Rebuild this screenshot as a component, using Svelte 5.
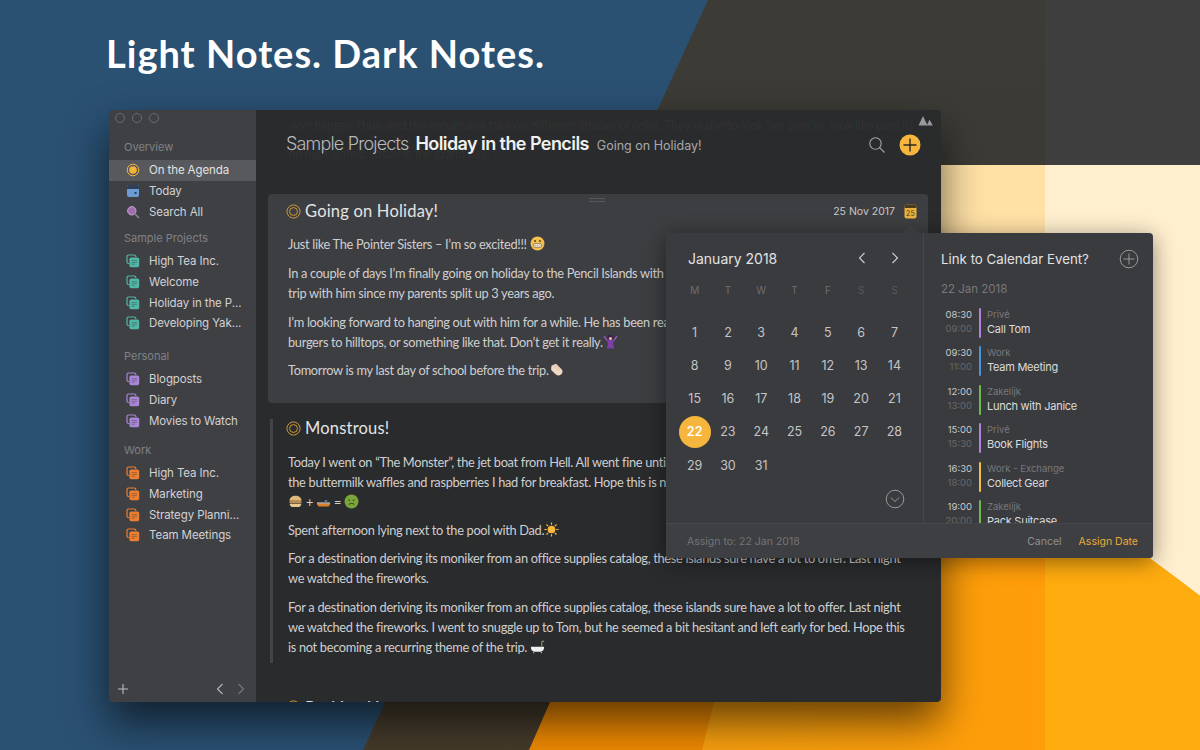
<script>
    const groups = [
        { label: 'Overview', items: [
            { name: 'On the Agenda', icon: 'agenda', active: true },
            { name: 'Today', icon: 'today' },
            { name: 'Search All', icon: 'search' }
        ]},
        { label: 'Sample Projects', items: [
            { name: 'High Tea Inc.', icon: 'stack', color: '#4fb8a6' },
            { name: 'Welcome', icon: 'stack', color: '#4fb8a6' },
            { name: 'Holiday in the P...', icon: 'stack', color: '#4fb8a6' },
            { name: 'Developing Yak...', icon: 'stack', color: '#4fb8a6' }
        ]},
        { label: 'Personal', items: [
            { name: 'Blogposts', icon: 'stack', color: '#a986d6' },
            { name: 'Diary', icon: 'stack', color: '#a986d6' },
            { name: 'Movies to Watch', icon: 'stack', color: '#a986d6' }
        ]},
        { label: 'Work', items: [
            { name: 'High Tea Inc.', icon: 'stack', color: '#ee7f30' },
            { name: 'Marketing', icon: 'stack', color: '#ee7f30' },
            { name: 'Strategy Planni...', icon: 'stack', color: '#ee7f30' },
            { name: 'Team Meetings', icon: 'stack', color: '#ee7f30' }
        ]}
    ]

    const weekdays = ['M', 'T', 'W', 'T', 'F', 'S', 'S']
    const days = Array.from({ length: 31 }, (_, i) => i + 1)

    const events = [
        { from: '08:30', to: '09:00', cal: 'Privé', title: 'Call Tom', color: '#b67fd8' },
        { from: '09:30', to: '11:00', cal: 'Work', title: 'Team Meeting', color: '#4a94dc' },
        { from: '12:00', to: '13:00', cal: 'Zakelijk', title: 'Lunch with Janice', color: '#6cbb4e' },
        { from: '15:00', to: '15:30', cal: 'Privé', title: 'Book Flights', color: '#b67fd8' },
        { from: '16:30', to: '18:00', cal: 'Work - Exchange', title: 'Collect Gear', color: '#eec044' },
        { from: '19:00', to: '20:00', cal: 'Zakelijk', title: 'Pack Suitcase', color: '#6cbb4e' }
    ]
</script>

{#snippet stack(color)}
    <svg class="side-icon" viewBox="0 0 14 14">
        <path d="M3 9.500H2.400A1.400 1.400 0 0 1 1 8.100V2.400A1.400 1.400 0 0 1 2.400 1h6A1.400 1.400 0 0 1 9.800 2.400V3" fill="none" stroke={color} stroke-width="1.200"/>
        <rect x="3.400" y="3.400" width="9.800" height="9.800" rx="1.800" fill={color}/>
        <path d="M5.600 6.600h5.400M5.600 8.400h5.400M5.600 10.200h3.400" stroke="#3f4044" stroke-width=".7" opacity=".6"/>
    </svg>
{/snippet}

{#snippet ring()}
    <svg class="ring" viewBox="0 0 16 16">
        <circle cx="8" cy="8" r="7" fill="none" stroke="#d5a036" stroke-width="1"/>
        <circle cx="8" cy="8" r="4.200" fill="none" stroke="#d5a036" stroke-width="1"/>
    </svg>
{/snippet}

{#snippet grin()}
    <svg class="emoji" viewBox="0 0 14 14">
        <circle cx="7" cy="7" r="6.500" fill="#f2c04e"/>
        <rect x="3" y="7" width="8" height="3.600" rx="1.600" fill="#f4f1e6" stroke="#6b4a1c" stroke-width=".5"/>
        <path d="M5 7v3.600M7 7v3.600M9 7v3.600M3 8.800h8" stroke="#a89a80" stroke-width=".4"/>
        <circle cx="4.700" cy="4.600" r=".9" fill="#5a3c14"/><circle cx="9.300" cy="4.600" r=".9" fill="#5a3c14"/>
    </svg>
{/snippet}

{#snippet dancer()}
    <svg class="emoji" viewBox="0 0 14 14">
        <circle cx="7" cy="3.400" r="2.600" fill="#3a2350"/>
        <circle cx="7" cy="4.200" r="1.500" fill="#e6b9a0"/>
        <path d="M3.600 5.600h6.800L9.400 9l1 4.600H3.600L4.600 9z" fill="#7c3fa8"/>
        <path d="M3.800 6 1 2M10.200 6 13 2" stroke="#a65bd0" stroke-width="1"/>
    </svg>
{/snippet}

{#snippet hands()}
    <svg class="emoji" viewBox="0 0 14 14">
        <path d="M2.200 3.400 6.600 1.600l5.600 5.600c.9 1.600.3 3.800-1.400 4.800-1.400.8-3.200.6-4.400-.4L2 7.400z" fill="#f0d8c4"/>
        <path d="M4 3.200l5 5M5.600 2.400l5 5" stroke="#c8a78e" stroke-width=".5"/>
    </svg>
{/snippet}

{#snippet burger()}
    <svg class="emoji" viewBox="0 0 14 14">
        <path d="M1.400 6.400C1.400 3 4 1.600 7 1.600s5.600 1.400 5.600 4.800z" fill="#e0b878"/>
        <rect x="1.200" y="6.600" width="11.600" height="2" rx="1" fill="#b98b4e"/>
        <path d="M1.600 9h10.800c0 2.200-1.600 3.200-3 3.200H4.600c-1.400 0-3-1-3-3.200z" fill="#e6c891"/>
    </svg>
{/snippet}

{#snippet boat()}
    <svg class="emoji" viewBox="0 0 14 14">
        <path d="M.5 8.800h13l-1.600 2.800H2.400z" fill="#d9822b"/>
        <path d="M1 8.400h12" stroke="#f1ece2" stroke-width=".9"/>
        <path d="M6.500 8.400 9 5.600h1.600l-1 2.800z" fill="#5e7f98"/>
    </svg>
{/snippet}

{#snippet sick()}
    <svg class="emoji" viewBox="0 0 14 14">
        <circle cx="7" cy="7" r="6.500" fill="#7aa53a"/>
        <path d="M4 5.400l1.800.8M10 5.400l-1.800.8" stroke="#2f4312" stroke-width=".9"/>
        <path d="M4.400 9.800c1.400-1.400 3.800-1.400 5.200 0" fill="none" stroke="#2f4312" stroke-width=".9"/>
    </svg>
{/snippet}

{#snippet sun()}
    <svg class="emoji" viewBox="0 0 14 14">
        <circle cx="7" cy="7" r="3.600" fill="#f6b73c"/>
        <path d="M7 .4v2.200M7 11.400v2.200M.4 7h2.200M11.400 7h2.200M2.300 2.300l1.600 1.600M10.100 10.100l1.600 1.600M2.300 11.700l1.600-1.600M10.100 3.900l1.600-1.600" stroke="#f6b73c" stroke-width="1.100"/>
    </svg>
{/snippet}

{#snippet bath()}
    <svg class="emoji" viewBox="0 0 14 14">
        <path d="M.8 7.200h12.400c0 3-1.400 4.600-3.600 4.600H4.400C2.200 11.800.8 10.200.8 7.200z" fill="#eef0f0"/>
        <path d="M11 7V2.800C11 1.600 12.800 1.400 13 2.800" fill="none" stroke="#7f9e6a" stroke-width="1"/>
        <path d="M3.400 12v1.200M10.600 12v1.200" stroke="#b8b8b8" stroke-width="1"/>
    </svg>
{/snippet}

<div class="page">
    <svg class="art" viewBox="0 0 1200 750">
        <defs>
            <linearGradient id="brown" x1="0" y1="0" x2="0" y2="1">
                <stop offset="0" stop-color="#3c3b36"/>
                <stop offset=".75" stop-color="#3b3931"/>
                <stop offset="1" stop-color="#463b2b"/>
            </linearGradient>
            <linearGradient id="amber" x1="0" y1="0" x2="1" y2="0">
                <stop offset="0" stop-color="#f9a10f"/>
                <stop offset="1" stop-color="#ff9d0a"/>
            </linearGradient>
        </defs>
        <rect width="1200" height="750" fill="#2a5072"/>
        <polygon points="708,0 1200,0 1200,750 363,750" fill="url(#brown)"/>
        <rect x="1045" width="155" height="165" fill="#3e3e3e"/>
        <rect x="941" y="165" width="104" height="585" fill="#ffe1a6"/>
        <rect x="1045" y="165" width="155" height="585" fill="#ffefcf"/>
        <path d="M529 750 700 360H1000L1110 530Q1160 565 1200 596V750Z" fill="#ef8a02"/>
        <path d="M702 750 800 360H1000L1045 510V750Z" fill="url(#amber)"/>
        <path d="M1045 510 1110 530Q1160 565 1200 596V750H1045Z" fill="#ffac0f"/>
    </svg>

    <h1>Light Notes. Dark Notes.</h1>

    <div class="window">
        <aside class="sidebar">
            <div class="lights"><i></i><i></i><i></i></div>

            {#each groups as group}
                <section class="group">
                    <div class="group-label">{group.label}</div>
                    {#each group.items as item}
                        <div class="row" class:active={item.active}>
                            {#if item.icon === 'agenda'}
                                <svg class="side-icon" viewBox="0 0 14 14">
                                    <circle cx="7" cy="7" r="5.800" fill="none" stroke="#f0b440" stroke-width="1"/>
                                    <circle cx="7" cy="7" r="3.800" fill="#f5b338"/>
                                </svg>
                            {:else if item.icon === 'today'}
                                <svg class="side-icon" viewBox="0 0 14 14">
                                    <rect x="1" y="1" width="12" height="12" rx="2" fill="#6c9bd6"/>
                                    <path d="M1 3a2 2 0 0 1 2-2h8a2 2 0 0 1 2 2v2H1z" fill="#2f3f58"/>
                                    <rect x="8.500" y="8" width="2" height="2" fill="#2f3f58"/>
                                </svg>
                            {:else if item.icon === 'search'}
                                <svg class="side-icon" viewBox="0 0 14 14">
                                    <circle cx="5.800" cy="5.800" r="4.200" fill="#a06fb0" stroke="#c3a3cf" stroke-width="1"/>
                                    <path d="M9 9l4 4" stroke="#8f8f96" stroke-width="1.300"/>
                                </svg>
                            {:else}
                                {@render stack(item.color)}
                            {/if}
                            <span>{item.name}</span>
                        </div>
                    {/each}
                </section>
            {/each}

            <div class="side-foot">
                <svg width="12" height="12" viewBox="0 0 12 12"><path d="M6 1v10M1 6h10" stroke="#bdbdc0" stroke-width="1.100"/></svg>
                <div class="side-nav">
                    <svg width="8" height="12" viewBox="0 0 8 12"><path d="M6.500 1 1.500 6l5 5" fill="none" stroke="#b5b5b8" stroke-width="1.100"/></svg>
                    <svg width="8" height="12" viewBox="0 0 8 12"><path d="M1.500 1l5 5-5 5" fill="none" stroke="#77787b" stroke-width="1.100"/></svg>
                </div>
            </div>
        </aside>

        <main class="main">
            <div class="ghost ghost-1">sky changes, thus, and the mountains take on different shades of color. They really do look like pencils. look like pencils</div>
            <div class="ghost ghost-2">on highlighted. Today is the grand day!</div>

            <header class="head">
                <div class="crumbs">
                    <span class="crumb-light">Sample Projects</span>
                    <span class="crumb-bold">Holiday in the Pencils</span>
                    <span class="crumb-small">Going on Holiday!</span>
                </div>
                <svg class="search" width="18" height="18" viewBox="0 0 18 18">
                    <circle cx="7.500" cy="7.500" r="5.700" fill="none" stroke="#a5a5a7" stroke-width="1.100"/>
                    <path d="M11.600 11.600 16.500 16.500" stroke="#a5a5a7" stroke-width="1.200"/>
                </svg>
                <svg class="add" width="22" height="22" viewBox="0 0 22 22">
                    <circle cx="11" cy="11" r="10.500" fill="#f6b63e"/>
                    <path d="M11 4.500v13M4.500 11h13" stroke="#2d2a22" stroke-width="1.400"/>
                </svg>
            </header>

            <svg class="peaks" width="15" height="10" viewBox="0 0 15 10">
                <path d="M5 0 9.500 9.500H0.500zM11.500 3.500 14.800 9.500H8.800z" fill="#9a9a9c"/>
            </svg>

            <div class="notes">
                <article class="card">
                    <div class="handle"></div>
                    <div class="note-title">
                        {@render ring()}
                        <span>Going on Holiday!</span>
                        <span class="due">25 Nov 2017</span>
                        <svg class="due-icon" width="13" height="15" viewBox="0 0 13 15">
                            <rect x=".5" y=".5" width="12" height="14" rx="2" fill="#eab13f"/>
                            <path d="M.5 2.500a2 2 0 0 1 2-2h8a2 2 0 0 1 2 2v1.500H.5z" fill="#4a3c1e"/>
                            <text x="6.500" y="12" text-anchor="middle">25</text>
                        </svg>
                    </div>
                    <p>Just like The Pointer Sisters – I’m so excited!!! {@render grin()}</p>
                    <p>In a couple of days I’m finally going on holiday to the Pencil Islands with my dad. It will be the first proper<br/>trip with him since my parents split up 3 years ago.</p>
                    <p>I’m looking forward to hanging out with him for a while. He has been really into climbing lately, from<br/>burgers to hilltops, or something like that. Don’t get it really.{@render dancer()}</p>
                    <p>Tomorrow is my last day of school before the trip.{@render hands()}</p>
                </article>

                <article class="quote">
                    <div class="note-title">
                        {@render ring()}
                        <span>Monstrous!</span>
                    </div>
                    <p>Today I went on “The Monster”, the jet boat from Hell. All went fine until we hit the rapids and I lost all of<br/>the buttermilk waffles and raspberries I had for breakfast. Hope this is not going to be a thing this holiday.<br/>{@render burger()} + {@render boat()} = {@render sick()}</p>
                    <p>Spent afternoon lying next to the pool with Dad.{@render sun()}</p>
                    <p>For a destination deriving its moniker from an office supplies catalog, these islands sure have a lot to offer. Last night<br/>we watched the fireworks.</p>
                    <p>For a destination deriving its moniker from an office supplies catalog, these islands sure have a lot to offer. Last night<br/>we watched the fireworks. I went to snuggle up to Tom, but he seemed a bit hesitant and left early for bed. Hope this<br/>is not becoming a recurring theme of the trip. {@render bath()}</p>
                </article>

                <div class="note-title next">
                    {@render ring()}
                    <span>Packing List</span>
                </div>
            </div>

            <div class="popover">
                <div class="caret"></div>
                <div class="pop-body">
                    <section class="calendar">
                        <div class="cal-head">
                            <span>January 2018</span>
                            <div class="cal-nav">
                                <svg width="8" height="12" viewBox="0 0 8 12"><path d="M6.500 1 1.500 6l5 5" fill="none" stroke="#cfcfd0" stroke-width="1.100"/></svg>
                                <svg width="8" height="12" viewBox="0 0 8 12"><path d="M1.500 1l5 5-5 5" fill="none" stroke="#cfcfd0" stroke-width="1.100"/></svg>
                            </div>
                        </div>
                        <div class="weekdays">
                            {#each weekdays as d}<span>{d}</span>{/each}
                        </div>
                        <div class="days">
                            {#each days as d}
                                <span class:picked={d === 22}>{d}</span>
                            {/each}
                        </div>
                        <svg class="more" width="20" height="20" viewBox="0 0 20 20">
                            <circle cx="10" cy="10" r="8.800" fill="none" stroke="#98989a" stroke-width="1"/>
                            <path d="M5.800 8.500 10 12.500l4.200-4" fill="none" stroke="#98989a" stroke-width="1"/>
                        </svg>
                    </section>
                    <section class="link">
                        <div class="link-head">
                            <span>Link to Calendar Event?</span>
                            <svg width="20" height="20" viewBox="0 0 20 20">
                                <circle cx="10" cy="10" r="8.800" fill="none" stroke="#98989a" stroke-width="1"/>
                                <path d="M10 4.500v11M4.500 10h11" stroke="#98989a" stroke-width="1"/>
                            </svg>
                        </div>
                        <div class="link-date">22 Jan 2018</div>
                        <div class="events">
                            {#each events as ev}
                                <div class="event">
                                    <div class="times"><b>{ev.from}</b><i>{ev.to}</i></div>
                                    <div class="bar" style="background: {ev.color}"></div>
                                    <div class="ev-text"><small>{ev.cal}</small><span>{ev.title}</span></div>
                                </div>
                            {/each}
                        </div>
                    </section>
                </div>
                <footer class="pop-foot">
                    <span class="assign-to">Assign to: 22 Jan 2018</span>
                    <span class="cancel">Cancel</span>
                    <span class="assign">Assign Date</span>
                </footer>
            </div>
        </main>
    </div>
</div>

<style>
    :global(body) {
        margin: 0;
        background: #2a5072;
    }

    .page {
        position: relative;
        width: 1200px;
        height: 750px;
        overflow: hidden;
        font-family: Inter, "Liberation Sans", sans-serif;
    }

    .art {
        position: absolute;
        inset: 0;
        width: 1200px;
        height: 750px;
    }

    h1 {
        position: relative;
        box-sizing: border-box;
        height: 110px;
        margin: 0;
        padding: 29px 0 0 106px;
        font-family: Lato, sans-serif;
        font-size: 38px;
        line-height: 48px;
        font-weight: 700;
        letter-spacing: 1px;
        color: #fff;
    }

    .window {
        position: relative;
        display: flex;
        width: 832px;
        height: 592px;
        margin-left: 109px;
        border-radius: 4px;
        box-shadow: 0 20px 42px rgba(0, 0, 0, .6);
    }

    /* sidebar */
    .sidebar {
        display: flex;
        flex-direction: column;
        flex: none;
        width: 147px;
        background: #3f4044;
        border-radius: 4px 0 0 4px;
    }

    .lights {
        display: flex;
        gap: 7px;
        height: 29px;
        padding: 3px 0 0 6px;
        box-sizing: border-box;
    }

    .lights i {
        width: 10px;
        height: 10px;
        border: 1px solid #6b6c70;
        border-radius: 50%;
        box-sizing: border-box;
    }

    .group-label {
        height: 16px;
        margin-bottom: 5px;
        padding-left: 15px;
        font-size: 11px;
        line-height: 16px;
        color: #808186;
    }

    .group:nth-of-type(2) { margin-top: 8px; }
    .group:nth-of-type(3) { margin-top: 14px; }
    .group:nth-of-type(4) { margin-top: 11px; }

    .row {
        display: flex;
        align-items: center;
        gap: 9px;
        height: 20.7px;
        padding-left: 17px;
        font-size: 11.500px;
        letter-spacing: -.1px;
        color: #d2d2d4;
        white-space: nowrap;
    }

    .row.active {
        background: #58595c;
        color: #e2e2e3;
    }

    .side-icon {
        flex: none;
        width: 14px;
        height: 14px;
    }

    .side-foot {
        display: flex;
        align-items: center;
        justify-content: space-between;
        margin-top: auto;
        padding: 0 11px 7px 8px;
    }

    .side-nav {
        display: flex;
        gap: 13px;
    }

    /* main column */
    .main {
        position: relative;
        display: flex;
        flex-direction: column;
        flex: 1;
        min-width: 0;
        background: #2a2b2d;
        border-radius: 0 4px 4px 0;
    }

    .ghost {
        position: absolute;
        left: 32px;
        font-family: Lato, sans-serif;
        font-size: 12.800px;
        letter-spacing: -.31px;
        color: rgba(255, 255, 255, .045);
        white-space: nowrap;
    }

    .ghost-1 { top: 7px; }
    .ghost-2 { top: 35px; }

    .head {
        position: relative;
        display: flex;
        align-items: center;
        flex: none;
        height: 84px;
        padding: 0 20px 14px 30px;
        box-sizing: border-box;
    }

    .crumbs {
        display: flex;
        align-items: baseline;
        flex: 1;
        margin-top: -4px;
        white-space: nowrap;
    }

    .crumb-light {
        font-size: 18px;
        font-weight: 300;
        letter-spacing: -.83px;
        color: #b8b8ba;
    }

    .crumb-bold {
        margin-left: 7px;
        font-size: 18px;
        font-weight: 600;
        letter-spacing: -.57px;
        color: #f0f0f0;
    }

    .crumb-small {
        margin-left: 8px;
        font-size: 12.500px;
        color: #a9a9ab;
    }

    .search {
        margin-right: 13px;
    }

    .peaks {
        position: absolute;
        top: 6px;
        right: 8px;
    }

    .notes {
        flex: 1;
        min-height: 0;
        overflow: hidden;
        padding: 0 13px 0 12px;
        font-family: Lato, sans-serif;
        border-radius: 0 0 4px 0;
    }

    .note-title {
        display: flex;
        align-items: center;
        gap: 4px;
        height: 18px;
        margin: 0 0 14px -2px;
        font-size: 16.500px;
        letter-spacing: .2px;
        color: #e4e4e5;
    }

    .ring {
        flex: none;
        width: 15px;
        height: 15px;
    }

    .card {
        position: relative;
        box-sizing: border-box;
        height: 209px;
        padding: 8px 23px 0 20px;
        background: #3d3e41;
        border-radius: 4px;
    }

    .card p {
        margin-bottom: 8.800px;
    }

    .handle {
        position: absolute;
        top: 4px;
        left: 321px;
        width: 16px;
        height: 2px;
        border-top: 1px solid #56575a;
        border-bottom: 1px solid #56575a;
    }

    .due {
        margin-left: auto;
        margin-right: 5px;
        font-family: Inter, sans-serif;
        font-size: 10.500px;
        letter-spacing: 0;
        color: #c8c8c9;
    }

    .due-icon {
        margin-right: -12px;
    }

    .due-icon text {
        font-family: Inter, sans-serif;
        font-size: 7px;
        fill: #4a3c1e;
    }

    p {
        margin: 0 0 8.200px;
        font-size: 12.800px;
        letter-spacing: -.31px;
        line-height: 20px;
        color: #cfcfd0;
        white-space: nowrap;
    }

    .emoji {
        width: 15px;
        height: 15px;
        vertical-align: -2px;
    }

    .quote {
        margin: 16px 0 0 2px;
        padding: 0 0 6px 15px;
        border-left: 3px solid #434446;
    }

    .quote .note-title {
        margin-bottom: 15px;
    }

    .quote p:last-child {
        margin-bottom: 0;
    }

    .note-title.next {
        margin: 36px 0 0 18px;
    }

    /* date picker */
    .popover {
        position: absolute;
        top: 123px;
        left: 410px;
        width: 487px;
        height: 325px;
        display: flex;
        flex-direction: column;
        background: #3a3b3e;
        border-radius: 4px;
        box-shadow: 0 4px 22px rgba(0, 0, 0, .45);
    }

    .caret {
        position: absolute;
        top: -6px;
        left: 239px;
        width: 11px;
        height: 11px;
        background: #3a3b3e;
        transform: rotate(45deg);
    }

    .pop-body {
        position: relative;
        display: flex;
        flex: 1;
        min-height: 0;
    }

    .calendar {
        position: relative;
        box-sizing: border-box;
        width: 258px;
        padding: 0 12px;
        border-right: 1px solid #47484b;
    }

    .cal-head {
        display: flex;
        align-items: center;
        justify-content: space-between;
        height: 50px;
        padding: 0 12px 0 10px;
        font-size: 14px;
        color: #e2e2e3;
    }

    .cal-nav {
        display: flex;
        gap: 25px;
    }

    .weekdays, .days {
        display: grid;
        grid-template-columns: repeat(7, 33.300px);
        justify-items: center;
    }

    .weekdays {
        height: 16px;
        font-size: 10px;
        line-height: 14px;
        color: #6d6e71;
    }

    .weekdays span:nth-child(n+6) {
        color: #58595c;
    }

    .days {
        grid-auto-rows: 33.300px;
        margin-top: 17px;
        font-size: 12.500px;
        color: #c4c4c6;
    }

    .days span {
        display: flex;
        align-items: center;
        justify-content: center;
        width: 32px;
        height: 32px;
        border-radius: 50%;
    }

    .days .picked {
        background: #f6b63e;
        color: #fff;
        font-weight: 600;
    }

    .more {
        position: absolute;
        right: 18px;
        bottom: 14px;
    }

    .link {
        flex: 1;
        min-width: 0;
        overflow: hidden;
        padding: 0 14px 0 17px;
    }

    .link-head {
        display: flex;
        align-items: center;
        justify-content: space-between;
        height: 52px;
        font-size: 13.300px;
        color: #e2e2e3;
    }

    .link-date {
        height: 25px;
        margin-top: -2px;
        font-size: 11.500px;
        line-height: 12px;
        color: #77787b;
    }

    .events {
        display: flex;
        flex-direction: column;
        gap: 8.400px;
    }

    .event {
        display: flex;
        align-items: stretch;
        height: 30px;
        margin-left: -8px;
    }

    .times {
        display: flex;
        flex-direction: column;
        align-items: flex-end;
        width: 39px;
        font-size: 9.500px;
        line-height: 14px;
    }

    .times b {
        font-weight: 400;
        color: #c9c9cb;
    }

    .times i {
        font-style: normal;
        color: #67686b;
    }

    .bar {
        flex: none;
        width: 2px;
        margin: 0 6px 0 7px;
        border-radius: 1px;
    }

    .ev-text {
        display: flex;
        flex-direction: column;
        white-space: nowrap;
    }

    .ev-text small {
        font-size: 9.500px;
        line-height: 14px;
        color: #77787b;
    }

    .ev-text span {
        font-size: 11px;
        letter-spacing: -.25px;
        line-height: 14px;
        color: #dcdcdd;
    }

    .pop-foot {
        display: flex;
        align-items: center;
        flex: none;
        height: 35px;
        padding: 0 15px 0 21px;
        background: #3e3f42;
        border-top: 1px solid #47484b;
        border-radius: 0 0 4px 4px;
        box-sizing: border-box;
        font-size: 10.500px;
    }

    .assign-to {
        flex: 1;
        color: #737477;
    }

    .cancel {
        margin-right: 17px;
        color: #8e8f91;
    }

    .assign {
        color: #e9ab36;
    }
</style>
